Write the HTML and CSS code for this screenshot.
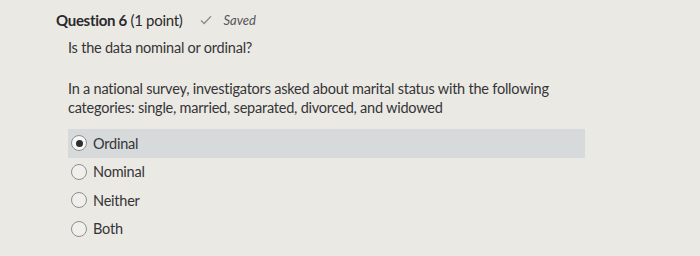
FILE: index.html
```html
<!DOCTYPE html>
<html>
<head>
<meta charset="utf-8">
<link rel="stylesheet" href="styles.css">
</head>
<body>
<div class="page">
  <div class="qhead">
    <span class="qtitle"><b>Question 6</b> (1 point)</span>
    <span class="saved">
      <svg class="check" width="12" height="10" viewBox="0 0 12 10"><path d="M1 5.5 L4.2 8.5 L11 1.2" fill="none" stroke="#8a8c90" stroke-width="1.3"/></svg>
      <i>Saved</i>
    </span>
  </div>
  <div class="body">
    <p class="ask">Is the data nominal or ordinal?</p>
    <p class="desc">In a national survey, investigators asked about marital status with the following categories: single, married, separated, divorced, and widowed</p>
    <div class="options">
      <label class="opt selected"><span class="radio on"></span>Ordinal</label>
      <label class="opt"><span class="radio"></span>Nominal</label>
      <label class="opt"><span class="radio"></span>Neither</label>
      <label class="opt"><span class="radio"></span>Both</label>
    </div>
  </div>
</div>
</body>
</html>
```
FILE: styles.css
```css
html, body {
  margin: 0;
  padding: 0;
}
body {
  background: #ebe9e4;
  font-family: Lato, "Open Sans", sans-serif;
  color: #353537;
  width: 700px;
  height: 256px;
  overflow: hidden;
}
.page {
  padding: 8px 0 0 56px;
}
.qhead {
  display: flex;
  align-items: center;
  height: 24px;
}
.qtitle {
  font-size: 15px;
  letter-spacing: -0.3px;
  color: #2a2a2c;
}
.qtitle b {
  font-weight: 700;
}
.saved {
  display: flex;
  align-items: center;
  margin-left: 18px;
  font-size: 13px;
  color: #55565a;
}
.check {
  margin-right: 11px;
}
.body {
  padding-left: 12px;
  font-size: 14.5px;
  letter-spacing: -0.22px;
}
.ask {
  margin: 6px 0 0;
  line-height: 20px;
}
.desc {
  margin: 21px 0 0;
  line-height: 19px;
  width: 500px;
}
.options {
  margin-top: 12px;
  width: 517px;
  display: flex;
  flex-direction: column;
}
.opt {
  display: flex;
  align-items: center;
  height: 28.5px;
}
.opt.selected {
  background: #d6dadb;
}
.radio {
  box-sizing: border-box;
  width: 16px;
  height: 16px;
  border: 1px solid #8e8f92;
  border-radius: 50%;
  margin: 0 6px 0 3px;
  background: #f1efeb;
  display: flex;
  align-items: center;
  justify-content: center;
}
.radio.on {
  background: #f6f6f6;
}
.radio.on::after {
  content: "";
  width: 7px;
  height: 7px;
  border-radius: 50%;
  background: #2e2e30;
}
```
